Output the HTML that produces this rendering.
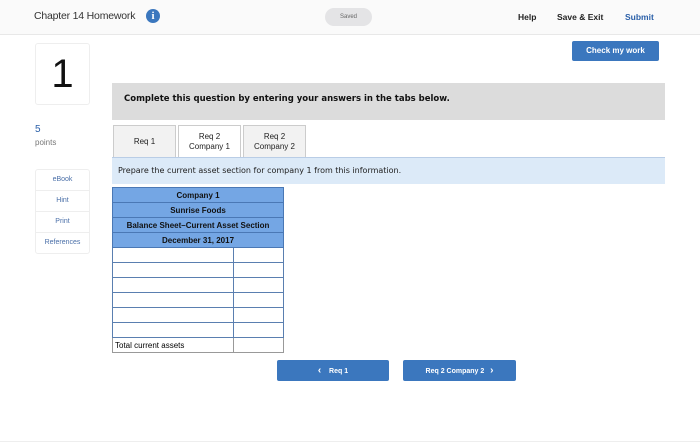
<!DOCTYPE html><html><head><style>
body{margin:0;width:700px;height:448px;background:#fff;font-family:"Liberation Sans",sans-serif;position:relative;overflow:hidden}
.a{position:absolute}
.hdr{left:0;top:0;width:700px;height:34px;background:#fafafa;border-bottom:1px solid #e8e8e8}
.btn{background:#3b77be;color:#fff;font-weight:bold;font-size:8px;text-align:center;border-radius:2px}
.tab{top:125px;height:32px;background:#f2f2f2;border:1px solid #ccc;border-bottom:none;font-size:8px;text-align:center;box-sizing:border-box;color:#222;line-height:10px}
table{border-collapse:collapse}
td{border:1px solid #5a7fb0;height:14px;padding:0;font-size:8px}
.h td{background:#74a6e4;font-weight:bold;text-align:center;color:#111;border-color:#4a78b5}
.side div{height:20px;line-height:20px;text-align:center;font-size:7px;color:#4a6fa8;border-bottom:1px solid #eee}
</style></head><body>
<div class="a hdr"></div>
<div class="a" style="left:34px;top:10px;font-size:10.5px;letter-spacing:-0.2px;color:#333">Chapter 14 Homework</div>
<div class="a" style="left:146px;top:9px;width:14px;height:14px;border-radius:50%;background:#3b77be;color:#fff;font-size:11px;font-weight:bold;text-align:center;line-height:14px;font-family:'Liberation Serif',serif">i</div>
<div class="a" style="left:325px;top:8px;width:47px;height:18px;border-radius:9px;background:#e4e4e6;font-size:6px;color:#666;text-align:center;line-height:18px">Saved</div>
<div class="a" style="left:518px;top:12px;font-size:8.5px;font-weight:bold;color:#222">Help</div>
<div class="a" style="left:557px;top:12px;font-size:8.5px;font-weight:bold;color:#222">Save &amp; Exit</div>
<div class="a" style="left:625px;top:12px;font-size:8.5px;font-weight:bold;color:#2a5fa8">Submit</div>
<div class="a btn" style="left:572px;top:41px;width:87px;height:20px;line-height:20px">Check my work</div>
<div class="a" style="left:35px;top:43px;width:55px;height:62px;border:1px solid #eee;border-radius:3px;box-sizing:border-box;font-size:40px;text-align:center;line-height:60px;color:#111">1</div>
<div class="a" style="left:112px;top:83px;width:553px;height:37px;background:#dcdcdc"></div>
<div class="a" style="left:124px;top:94px;font-size:8.5px;font-weight:bold;color:#111;font-family:'DejaVu Sans',sans-serif">Complete this question by entering your answers in the tabs below.</div>
<div class="a" style="left:35px;top:124px;font-size:10px;color:#2a5fa8">5</div>
<div class="a" style="left:35px;top:138px;font-size:8px;color:#777">points</div>
<div class="a side" style="left:35px;top:169px;width:55px;border:1px solid #eee;border-radius:3px;box-sizing:border-box"><div>eBook</div><div>Hint</div><div>Print</div><div style="border:none">References</div></div>
<div class="a tab" style="left:113px;width:63px;padding-top:11px">Req 1</div>
<div class="a tab" style="left:178px;width:63px;background:#fff;padding-top:6px;height:33px">Req 2<br>Company 1</div>
<div class="a tab" style="left:243px;width:63px;padding-top:6px">Req 2<br>Company 2</div>
<div class="a" style="left:112px;top:157px;width:553px;height:26px;background:#dceaf8;border-top:1px solid #b9cde6"></div>
<div class="a" style="left:118px;top:166px;font-size:8px;color:#222;font-family:'DejaVu Sans',sans-serif">Prepare the current asset section for company 1 from this information.</div>
<table class="a" style="left:112px;top:187px;width:172px">
<tr class="h"><td colspan="2">Company 1</td></tr>
<tr class="h"><td colspan="2">Sunrise Foods</td></tr>
<tr class="h"><td colspan="2">Balance Sheet–Current Asset Section</td></tr>
<tr class="h"><td colspan="2">December 31, 2017</td></tr>
<tr><td style="width:120px"></td><td></td></tr>
<tr><td></td><td></td></tr><tr><td></td><td></td></tr><tr><td></td><td></td></tr><tr><td></td><td></td></tr><tr><td></td><td></td></tr>
<tr><td style="border-color:#999;padding-left:2px">Total current assets</td><td style="border-color:#999;border-top:1px solid #333"></td></tr>
</table>
<div class="a btn" style="left:277px;top:360px;width:112px;height:21px;line-height:21px;font-size:7px"><span style="font-size:10px">‹</span>&nbsp;&nbsp;&nbsp;&nbsp;Req 1</div>
<div class="a btn" style="left:403px;top:360px;width:113px;height:21px;line-height:21px;font-size:7px">Req 2 Company 2&nbsp;&nbsp;&nbsp;<span style="font-size:10px">›</span></div>
<div class="a" style="left:0;top:441px;width:700px;height:1px;background:#eee"></div>
</body></html>
